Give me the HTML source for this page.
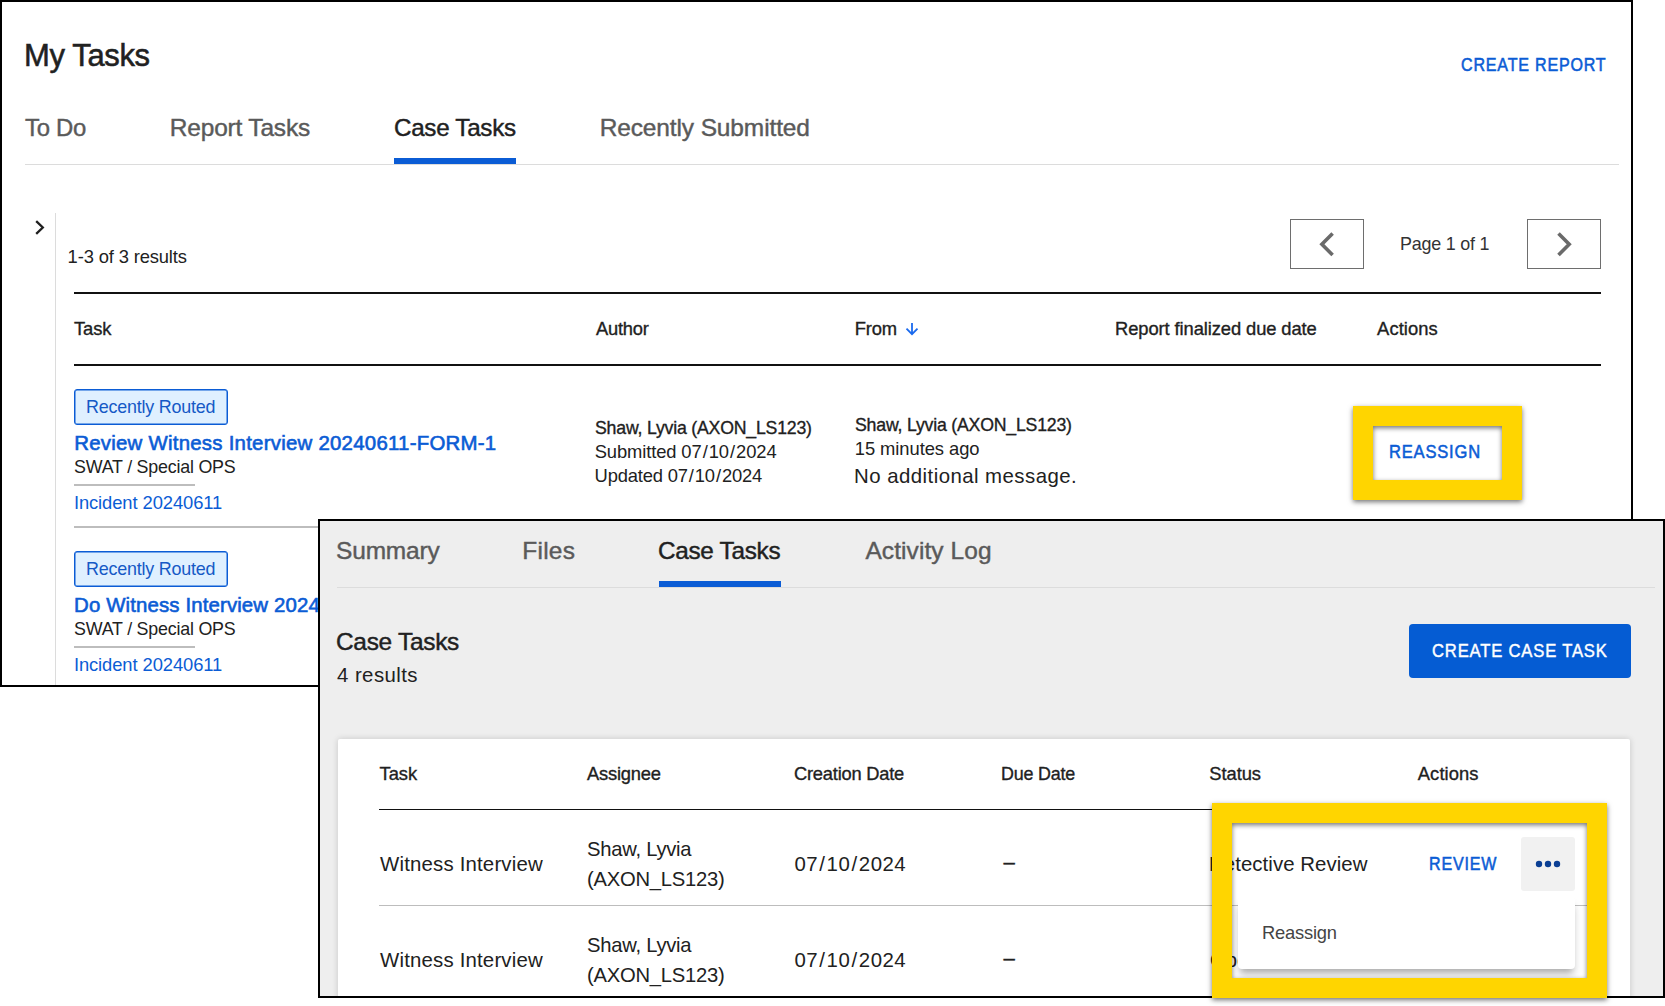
<!DOCTYPE html>
<html lang="en">
<head>
<meta charset="utf-8">
<title>My Tasks - Case Tasks</title>
<style>
html,body{margin:0;padding:0;}
body{width:1665px;height:1006px;position:relative;overflow:hidden;background:#fff;font-family:"Liberation Sans",sans-serif;}
.abs,.t,.ln{position:absolute;}
.t{white-space:pre;line-height:1;transform-origin:0 50%;}
.win{position:absolute;overflow:hidden;}
.page{position:absolute;width:1665px;height:1006px;}
.frame{position:absolute;left:0;top:0;right:0;bottom:0;border:2px solid #000;box-sizing:border-box;}
.badge{position:absolute;left:74px;width:154px;height:36px;box-sizing:border-box;border:1px solid #0b5cd5;border-radius:3px;background:#dff0ff;box-shadow:inset 0 0 0 0.5px #0b5cd5;}
.pgbtn{position:absolute;top:219px;width:74px;height:50px;box-sizing:border-box;border:1px solid #6e6e6e;background:#fff;}
.hl{position:absolute;box-sizing:border-box;border:20px solid #ffd500;box-shadow:0 2px 5px 0 rgba(0,0,0,.55), inset 0 2px 5px 0 rgba(0,0,0,.55);}
</style>
</head>
<body>

<!-- ================= Window 1 : My Tasks ================= -->
<div class="win" style="left:0;top:0;width:1633px;height:687px;background:#fff;">
 <div class="page" style="left:0;top:0;">
  <!-- tabs underline -->
  <div class="ln" style="left:25px;top:164px;width:1594px;height:1px;background:#dcdcdc;"></div>
  <div class="ln" style="left:394px;top:158px;width:122px;height:6px;background:#0b5cd5;"></div>
  <!-- collapse chevron -->
  <svg class="abs" style="left:30px;top:217.4px" width="20" height="20" viewBox="0 0 20 20"><path d="M6.2 4.2 L12.8 10.5 L6.2 16.8" fill="none" stroke="#1f1f1f" stroke-width="2.3"/></svg>
  <div class="ln" style="left:55px;top:213px;width:1px;height:480px;background:#dcdcdc;"></div>
  <!-- pagination -->
  <div class="pgbtn" style="left:1290px;"><svg width="72" height="48" viewBox="0 0 72 48"><path d="M41.6 13.6 L30.9 24.3 L41.6 35" fill="none" stroke="#6a6a6a" stroke-width="3.6"/></svg></div>
  <div class="pgbtn" style="left:1527px;"><svg width="72" height="48" viewBox="0 0 72 48"><path d="M30.5 13.6 L41.2 24.3 L30.5 35" fill="none" stroke="#6a6a6a" stroke-width="3.6"/></svg></div>
  <!-- table lines -->
  <div class="ln" style="left:74px;top:292px;width:1527px;height:2px;background:#111;"></div>
  <div class="ln" style="left:74px;top:364px;width:1527px;height:2px;background:#111;"></div>
  <!-- sort arrow -->
  <svg class="abs" style="left:903px;top:320px" width="18" height="18" viewBox="0 0 18 18"><path d="M9 3 V14 M3.5 8.7 L9 14.2 L14.5 8.7" fill="none" stroke="#1a6aee" stroke-width="1.8"/></svg>
  <!-- row 1 -->
  <div class="badge" style="top:389px;"></div>
  <div class="ln" style="left:74px;top:484px;width:121px;height:2px;background:#bdbdbd;"></div>
  <div class="ln" style="left:74px;top:526px;width:1527px;height:2px;background:#bdbdbd;"></div>
  <!-- row 2 -->
  <div class="badge" style="top:551px;"></div>
  <div class="ln" style="left:74px;top:646px;width:121px;height:2px;background:#bdbdbd;"></div>
<span class="t" style="left:24.4px;top:40.00px;font-size:31.21px;letter-spacing:-0.367px;color:#212121;-webkit-text-stroke:0.54px #212121;transform:scaleX(0.9930);">My Tasks</span>
<span class="t" style="left:1460.8px;top:56.00px;font-size:18.36px;letter-spacing:0.900px;color:#0b5cd5;-webkit-text-stroke:0.54px #0b5cd5;transform:scaleX(0.8757);">CREATE REPORT</span>
<span class="t" style="left:25.2px;top:116.00px;font-size:24.48px;letter-spacing:-0.288px;color:#5a5a5a;-webkit-text-stroke:0.43px #5a5a5a;transform:scaleX(0.9764);">To Do</span>
<span class="t" style="left:169.8px;top:116.00px;font-size:24.48px;letter-spacing:-0.179px;color:#5a5a5a;-webkit-text-stroke:0.43px #5a5a5a;">Report Tasks</span>
<span class="t" style="left:394.1px;top:116.00px;font-size:24.48px;letter-spacing:-0.288px;color:#212121;-webkit-text-stroke:0.43px #212121;transform:scaleX(0.9891);">Case Tasks</span>
<span class="t" style="left:599.7px;top:116.00px;font-size:24.48px;letter-spacing:-0.113px;color:#5a5a5a;-webkit-text-stroke:0.43px #5a5a5a;">Recently Submitted</span>
<span class="t" style="left:67.6px;top:248.00px;font-size:18.36px;letter-spacing:-0.139px;color:#212121;">1-3 of 3 results</span>
<span class="t" style="left:1400.2px;top:235.00px;font-size:18.36px;letter-spacing:-0.216px;color:#333;transform:scaleX(0.9749);">Page 1 of 1</span>
<span class="t" style="left:74.0px;top:320.00px;font-size:18.36px;letter-spacing:-0.090px;color:#212121;-webkit-text-stroke:0.34px #212121;">Task</span>
<span class="t" style="left:595.7px;top:320.00px;font-size:18.36px;letter-spacing:-0.216px;color:#212121;-webkit-text-stroke:0.34px #212121;transform:scaleX(0.9960);">Author</span>
<span class="t" style="left:854.8px;top:320.00px;font-size:18.36px;letter-spacing:-0.162px;color:#212121;-webkit-text-stroke:0.34px #212121;">From</span>
<span class="t" style="left:1115.0px;top:320.00px;font-size:18.36px;letter-spacing:-0.097px;color:#212121;-webkit-text-stroke:0.34px #212121;">Report finalized due date</span>
<span class="t" style="left:1377.1px;top:320.00px;font-size:18.36px;letter-spacing:0.077px;color:#212121;-webkit-text-stroke:0.34px #212121;">Actions</span>
<span class="t" style="left:86.4px;top:398.00px;font-size:18.36px;letter-spacing:-0.216px;color:#1559c6;transform:scaleX(0.9757);">Recently Routed</span>
<span class="t" style="left:73.9px;top:458.00px;font-size:18.36px;letter-spacing:-0.216px;color:#212121;transform:scaleX(0.9716);">SWAT / Special OPS</span>
<span class="t" style="left:73.9px;top:494.00px;font-size:18.36px;letter-spacing:-0.086px;color:#0b5cd5;">Incident 20240611</span>
<span class="t" style="left:86.4px;top:560.00px;font-size:18.36px;letter-spacing:-0.216px;color:#1559c6;transform:scaleX(0.9757);">Recently Routed</span>
<span class="t" style="left:73.9px;top:620.00px;font-size:18.36px;letter-spacing:-0.216px;color:#212121;transform:scaleX(0.9716);">SWAT / Special OPS</span>
<span class="t" style="left:73.9px;top:656.00px;font-size:18.36px;letter-spacing:-0.086px;color:#0b5cd5;">Incident 20240611</span>
<span class="t" style="left:74.2px;top:433.00px;font-size:20.40px;letter-spacing:0.251px;color:#0b5cd5;-webkit-text-stroke:0.60px #0b5cd5;">Review Witness Interview 20240611-FORM-1</span>
<span class="t" style="left:74.1px;top:595.00px;font-size:20.40px;letter-spacing:0.130px;color:#0b5cd5;-webkit-text-stroke:0.60px #0b5cd5;">Do Witness Interview 20240611-FORM-2</span>
<span class="t" style="left:594.8px;top:419.00px;font-size:18.36px;letter-spacing:-0.216px;color:#212121;-webkit-text-stroke:0.34px #212121;transform:scaleX(0.9644);">Shaw, Lyvia (AXON_LS123)</span>
<span class="t" style="left:594.7px;top:443.00px;font-size:18.36px;letter-spacing:-0.110px;color:#212121;">Submitted 07<span style="padding:0 1.08px">/</span>10<span style="padding:0 1.08px">/</span>2024</span>
<span class="t" style="left:594.6px;top:467.00px;font-size:18.36px;letter-spacing:-0.182px;color:#212121;">Updated 07<span style="padding:0 1.08px">/</span>10<span style="padding:0 1.08px">/</span>2024</span>
<span class="t" style="left:855.0px;top:416.00px;font-size:18.36px;letter-spacing:-0.216px;color:#212121;-webkit-text-stroke:0.34px #212121;transform:scaleX(0.9644);">Shaw, Lyvia (AXON_LS123)</span>
<span class="t" style="left:854.8px;top:440.00px;font-size:18.36px;letter-spacing:-0.065px;color:#212121;">15 minutes ago</span>
<span class="t" style="left:854.1px;top:466.00px;font-size:20.40px;letter-spacing:0.452px;color:#212121;">No additional message.</span>
<span class="t" style="left:1388.5px;top:443.00px;font-size:18.36px;letter-spacing:0.900px;color:#0b5cd5;-webkit-text-stroke:0.54px #0b5cd5;transform:scaleX(0.9008);">REASSIGN</span>
  <!-- highlight 1 -->
  <div class="hl" style="left:1353px;top:406px;width:169px;height:94px;"></div>
 </div>
 <div class="frame"></div>
</div>

<!-- ================= Window 2 : Case > Case Tasks ================= -->
<div class="win" style="left:318px;top:519px;width:1347px;height:479px;background:#eeeeee;">
 <div class="page" style="left:-318px;top:-519px;">
  <div class="ln" style="left:337px;top:587px;width:1318px;height:1px;background:#dcdcdc;"></div>
  <div class="ln" style="left:659px;top:581px;width:122px;height:6px;background:#0b5cd5;"></div>
  <div class="abs" style="left:1409px;top:624px;width:222px;height:54px;border-radius:4px;background:#055cd3;"></div>
  <!-- card -->
  <div class="abs" style="left:338px;top:739px;width:1292px;height:300px;background:#fff;border-radius:2px;box-shadow:0 0 6px rgba(0,0,0,.17);"></div>
  <div class="ln" style="left:379px;top:809px;width:1209px;height:1px;background:#111;"></div>
  <div class="ln" style="left:379px;top:905px;width:1209px;height:1px;background:#bdbdbd;"></div>
<span class="t" style="left:336.1px;top:539.00px;font-size:24.48px;letter-spacing:-0.190px;color:#5a5a5a;-webkit-text-stroke:0.43px #5a5a5a;">Summary</span>
<span class="t" style="left:522.3px;top:539.00px;font-size:24.48px;letter-spacing:0.234px;color:#5a5a5a;-webkit-text-stroke:0.43px #5a5a5a;">Files</span>
<span class="t" style="left:658.4px;top:539.00px;font-size:24.48px;letter-spacing:-0.288px;color:#212121;-webkit-text-stroke:0.43px #212121;transform:scaleX(0.9932);">Case Tasks</span>
<span class="t" style="left:865.4px;top:539.00px;font-size:24.48px;letter-spacing:0.093px;color:#5a5a5a;-webkit-text-stroke:0.43px #5a5a5a;">Activity Log</span>
<span class="t" style="left:336.1px;top:630.00px;font-size:24.48px;letter-spacing:-0.288px;color:#212121;-webkit-text-stroke:0.43px #212121;transform:scaleX(0.9989);">Case Tasks</span>
<span class="t" style="left:337.0px;top:665.00px;font-size:20.40px;letter-spacing:0.437px;color:#212121;">4 results</span>
<span class="t" style="left:1432.1px;top:642.00px;font-size:18.36px;letter-spacing:0.900px;color:#fff;-webkit-text-stroke:0.42px #fff;transform:scaleX(0.9056);">CREATE CASE TASK</span>
<span class="t" style="left:379.6px;top:765.00px;font-size:18.36px;letter-spacing:-0.090px;color:#212121;-webkit-text-stroke:0.34px #212121;">Task</span>
<span class="t" style="left:587.4px;top:765.00px;font-size:18.36px;letter-spacing:-0.216px;color:#212121;-webkit-text-stroke:0.34px #212121;transform:scaleX(0.9991);">Assignee</span>
<span class="t" style="left:793.9px;top:765.00px;font-size:18.36px;letter-spacing:-0.216px;color:#212121;-webkit-text-stroke:0.34px #212121;transform:scaleX(0.9958);">Creation Date</span>
<span class="t" style="left:1001.2px;top:765.00px;font-size:18.36px;letter-spacing:-0.216px;color:#212121;-webkit-text-stroke:0.34px #212121;transform:scaleX(0.9747);">Due Date</span>
<span class="t" style="left:1209.2px;top:765.00px;font-size:18.36px;letter-spacing:-0.038px;color:#212121;-webkit-text-stroke:0.34px #212121;">Status</span>
<span class="t" style="left:1417.8px;top:765.00px;font-size:18.36px;letter-spacing:0.077px;color:#212121;-webkit-text-stroke:0.34px #212121;">Actions</span>
<span class="t" style="left:380.0px;top:854.00px;font-size:20.40px;letter-spacing:0.184px;color:#212121;">Witness Interview</span>
<span class="t" style="left:586.8px;top:839.00px;font-size:20.40px;letter-spacing:-0.240px;color:#212121;transform:scaleX(0.9900);">Shaw, Lyvia</span>
<span class="t" style="left:587.2px;top:869.00px;font-size:20.40px;letter-spacing:-0.240px;color:#212121;transform:scaleX(0.9912);">(AXON_LS123)</span>
<span class="t" style="left:794.4px;top:854.00px;font-size:20.40px;letter-spacing:0.492px;color:#212121;">07<span style="padding:0 1.20px">/</span>10<span style="padding:0 1.20px">/</span>2024</span>
<span class="t" style="left:1003.5px;top:852.00px;font-size:20.40px;letter-spacing:0.000px;color:#212121;-webkit-text-stroke:0.37px #212121;">–</span>
<span class="t" style="left:380.0px;top:950.00px;font-size:20.40px;letter-spacing:0.184px;color:#212121;">Witness Interview</span>
<span class="t" style="left:586.8px;top:935.00px;font-size:20.40px;letter-spacing:-0.240px;color:#212121;transform:scaleX(0.9900);">Shaw, Lyvia</span>
<span class="t" style="left:587.2px;top:965.00px;font-size:20.40px;letter-spacing:-0.240px;color:#212121;transform:scaleX(0.9912);">(AXON_LS123)</span>
<span class="t" style="left:794.4px;top:950.00px;font-size:20.40px;letter-spacing:0.492px;color:#212121;">07<span style="padding:0 1.20px">/</span>10<span style="padding:0 1.20px">/</span>2024</span>
<span class="t" style="left:1003.5px;top:948.00px;font-size:20.40px;letter-spacing:0.000px;color:#212121;-webkit-text-stroke:0.37px #212121;">–</span>
<span class="t" style="left:1209.1px;top:854.00px;font-size:20.40px;letter-spacing:0.052px;color:#212121;">Detective Review</span>
<span class="t" style="left:1209.9px;top:950.00px;font-size:20.40px;letter-spacing:0.000px;color:#212121;">Open</span>
  <!-- more button -->
  <div class="abs" style="left:1521px;top:837px;width:54px;height:54px;border-radius:3px;background:#f1f1f1;"></div>
  <svg class="abs" style="left:1533px;top:858px" width="30" height="12" viewBox="0 0 30 12"><circle cx="6" cy="6" r="3.2" fill="#0b3f94"/><circle cx="15" cy="6" r="3.2" fill="#0b3f94"/><circle cx="24" cy="6" r="3.2" fill="#0b3f94"/></svg>
<span class="t" style="left:1429.2px;top:855.00px;font-size:18.36px;letter-spacing:0.900px;color:#0b5cd5;-webkit-text-stroke:0.54px #0b5cd5;transform:scaleX(0.8753);">REVIEW</span>
  <!-- dropdown menu -->
  <div class="abs" style="left:1238px;top:897px;width:337px;height:72px;background:#fff;border-radius:4px;box-shadow:0 6px 6px -3px rgba(0,0,0,.24), 0 8px 10px 0 rgba(0,0,0,.12);"></div>
<span class="t" style="left:1262.0px;top:924.00px;font-size:18.36px;letter-spacing:-0.216px;color:#444;transform:scaleX(0.9992);">Reassign</span>
 </div>
 <div class="frame"></div>
</div>

<!-- highlight 2 (drawn over the window frame) -->
<div class="hl" style="left:1212px;top:803px;width:395px;height:195px;"></div>

</body>
</html>
